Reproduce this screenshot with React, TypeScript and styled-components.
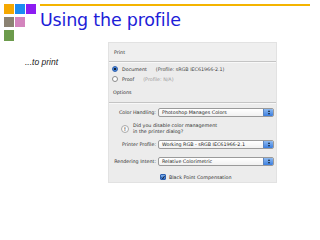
import React from 'react';
import styled, { createGlobalStyle } from 'styled-components';

const GlobalStyle = createGlobalStyle`
  html, body {
    margin: 0;
    padding: 0;
    background: #fff;
  }
  body {
    width: 320px;
    height: 240px;
    overflow: hidden;
    font-family: 'Liberation Sans', Arial, sans-serif;
  }
`;

const Slide = styled.div`
  width: 320px;
  height: 240px;
  display: flex;
  flex-direction: column;
`;

const Header = styled.header`
  display: flex;
  height: 42px;
`;

const Logo = styled.div`
  display: grid;
  grid-template-columns: repeat(3, 10px);
  grid-template-rows: 10px 10px 11px;
  column-gap: 1px;
  row-gap: 3px;
  padding: 4px 0 0 4px;
  align-content: start;
`;

const Square = styled.span<{ $color: string }>`
  background: ${(p) => p.$color};
`;

const TitleArea = styled.div`
  margin-left: 4px;
  padding-top: 4px;
  width: 270px;
`;

const Rule = styled.div`
  height: 2px;
  background: #f4b400;
`;

const Title = styled.h1`
  margin: 4px 0 0;
  font-family: 'DejaVu Sans', Verdana, sans-serif;
  font-weight: normal;
  font-size: 17.5px;
  line-height: 20px;
  color: #1d1dd8;
  letter-spacing: -0.2px;
`;

const Content = styled.div`
  display: flex;
`;

const Caption = styled.p`
  margin: 0;
  width: 108px;
  padding: 15px 0 0 25px;
  box-sizing: border-box;
  font-size: 8.5px;
  font-style: italic;
  color: #222;
`;

const Panel = styled.div`
  width: 169px;
  height: 141px;
  box-sizing: border-box;
  background: #ececec;
  border: 1px solid #e2e2e2;
  font-family: 'DejaVu Sans', sans-serif;
  font-size: 4.8px;
  color: #2e2e2e;
  display: flex;
  flex-direction: column;
`;

const PanelHead = styled.div`
  height: 18px;
  display: flex;
  align-items: center;
  padding-left: 5px;
  background: #efefef;
`;

const Divider = styled.div`
  height: 1px;
  background: #c4c4c4;
  border-bottom: 1px solid #f8f8f8;
`;

const Section = styled.div`
  padding: 1px 0 0 3px;
  display: flex;
  flex-direction: column;
`;

const RadioRow = styled.div`
  height: 10px;
  display: flex;
  align-items: center;
  gap: 4px;
`;

const Radio = styled.span<{ $on?: boolean }>`
  width: 6px;
  height: 6px;
  box-sizing: border-box;
  border-radius: 50%;
  border: 1px solid ${(p) => (p.$on ? '#2c5fb0' : '#8a8a8a')};
  background: ${(p) =>
    p.$on ? 'radial-gradient(circle, #123 0 1px, #4a86d8 1.2px)' : '#fff'};
`;

const Note = styled.span<{ $dim?: boolean }>`
  margin-left: 5px;
  color: ${(p) => (p.$dim ? '#9a9a9a' : '#444')};
`;

const OptionsLabel = styled.div`
  height: 10px;
  margin-top: 3px;
  margin-bottom: 5px;
  padding-left: 1px;
  display: flex;
  align-items: center;
`;

const Form = styled.div`
  display: grid;
  grid-template-columns: 46px 116px;
  column-gap: 2px;
  align-items: center;
  padding-left: 1px;
`;

const Label = styled.span`
  text-align: right;
  white-space: nowrap;
`;

const Popup = styled.div`
  height: 9px;
  box-sizing: border-box;
  border: 1px solid #9a9a9a;
  border-radius: 2px;
  background: linear-gradient(#fff, #f1f1f1);
  display: flex;
  align-items: center;
  padding-left: 3px;
  overflow: hidden;
  white-space: nowrap;
  color: #222;
`;

const Stepper = styled.span`
  margin-left: auto;
  width: 9px;
  height: 100%;
  flex-shrink: 0;
  background: linear-gradient(#8fbaf0, #3a7ee0);
  border-left: 1px solid #5a84c0;
  display: flex;
  flex-direction: column;
  align-items: center;
  justify-content: center;
  gap: 1px;
`;

const Arrow = styled.span<{ $up?: boolean }>`
  width: 0;
  height: 0;
  border-left: 1.5px solid transparent;
  border-right: 1.5px solid transparent;
  ${(p) => (p.$up ? 'border-bottom' : 'border-top')}: 2px solid #123;
`;

const Warning = styled.div`
  grid-column: 1 / 3;
  display: flex;
  align-items: center;
  gap: 4px;
  padding-left: 11px;
  margin: 6px 0 5px;
  line-height: 6px;
`;

const WarnIcon = styled.span`
  width: 8px;
  height: 8px;
  box-sizing: border-box;
  border-radius: 50%;
  border: 1px solid #aaa;
  background: #fafafa;
  display: flex;
  align-items: center;
  justify-content: center;
  font-size: 5px;
  font-weight: bold;
  color: #666;
`;

const Spacer = styled.div<{ $h: number }>`
  grid-column: 1 / 3;
  height: ${(p) => p.$h}px;
`;

const CheckRow = styled.div`
  grid-column: 2;
  display: flex;
  align-items: center;
  gap: 3px;
  height: 8px;
  padding-left: 2px;
`;

const Check = styled.span`
  width: 6px;
  height: 6px;
  box-sizing: border-box;
  border-radius: 1px;
  border: 1px solid #2c5fb0;
  background: linear-gradient(#7fb0ee, #2f6fd0);
  display: flex;
  align-items: center;
  justify-content: center;
`;

const Select = ({ value }: { value: string }) => (
  <Popup>
    {value}
    <Stepper>
      <Arrow $up />
      <Arrow />
    </Stepper>
  </Popup>
);

// null leaves a hole in the 3x3 logo grid
const squares = ['#f5a800', '#1c8cf2', '#8c1cf2', '#8b8272', '#d384bd', null, '#6c9b4c'];

const App = () => (
  <Slide>
    <GlobalStyle />
    <Header>
      <Logo>
        {squares.map((c, i) => (c ? <Square key={i} $color={c} /> : <span key={i} />))}
      </Logo>
      <TitleArea>
        <Rule />
        <Title>Using the profile</Title>
      </TitleArea>
    </Header>
    <Content>
      <Caption>...to print</Caption>
      <Panel>
        <PanelHead>Print</PanelHead>
        <Divider />
        <Section>
          <RadioRow>
            <Radio $on />
            Document
            <Note>(Profile: sRGB IEC61966-2.1)</Note>
          </RadioRow>
          <RadioRow>
            <Radio />
            Proof
            <Note $dim>(Profile: N/A)</Note>
          </RadioRow>
          <OptionsLabel>Options</OptionsLabel>
        </Section>
        <Divider />
        <Spacer $h={4} />
        <Form>
          <Label>Color Handling:</Label>
          <Select value="Photoshop Manages Colors" />
          <Warning>
            <WarnIcon>!</WarnIcon>
            <span>
              Did you disable color management
              <br />
              in the printer dialog?
            </span>
          </Warning>
          <Label>Printer Profile:</Label>
          <Select value="Working RGB - sRGB IEC61966-2.1" />
          <Spacer $h={8} />
          <Label>Rendering Intent:</Label>
          <Select value="Relative Colorimetric" />
          <Spacer $h={7} />
          <CheckRow>
            <Check>
              <svg width="5" height="5" viewBox="0 0 10 10">
                <path d="M2 5 L4.5 8 L9 1" stroke="#111" strokeWidth="2" fill="none" />
              </svg>
            </Check>
            Black Point Compensation
          </CheckRow>
        </Form>
      </Panel>
    </Content>
  </Slide>
);

export default App;
